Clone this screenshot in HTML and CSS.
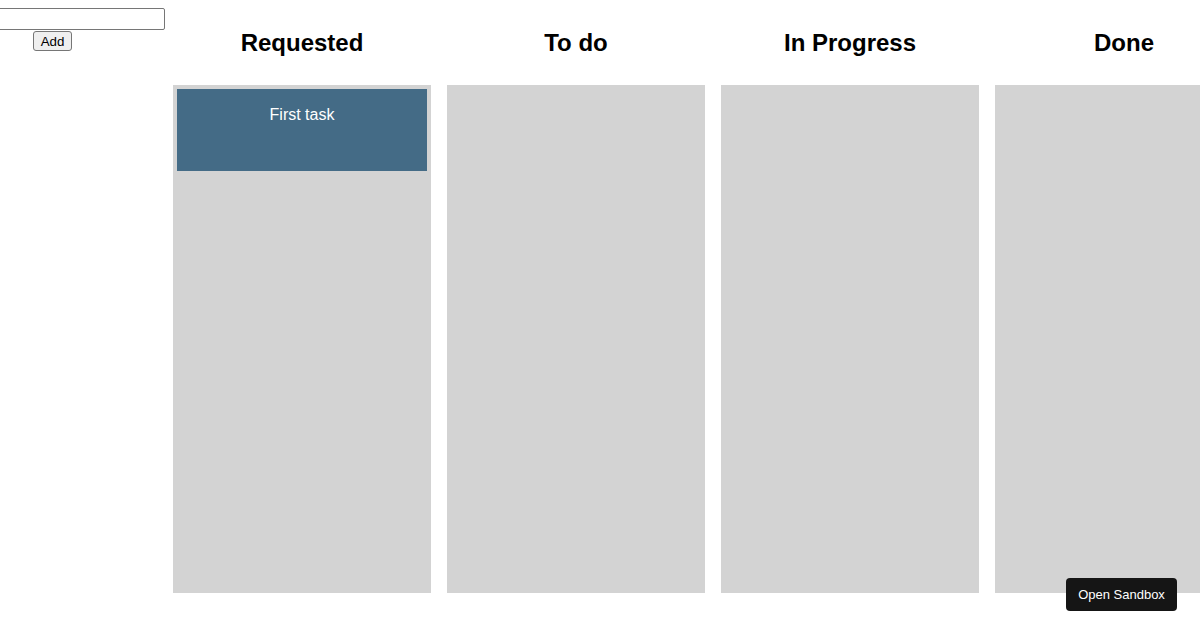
FILE: index.html
```html
<!DOCTYPE html>
<html>
<head>
<meta charset="utf-8">
<link rel="stylesheet" href="styles.css">
</head>
<body>
<div class="app">
  <div class="sidebar">
    <input class="task-input" type="text">
    <button class="add-btn">Add</button>
  </div>
  <div class="board">
    <div class="column">
      <h2 class="col-title">Requested</h2>
      <div class="col-body">
        <div class="card">First task</div>
      </div>
    </div>
    <div class="column">
      <h2 class="col-title">To do</h2>
      <div class="col-body"></div>
    </div>
    <div class="column">
      <h2 class="col-title">In Progress</h2>
      <div class="col-body"></div>
    </div>
    <div class="column">
      <h2 class="col-title">Done</h2>
      <div class="col-body"></div>
    </div>
  </div>
</div>
<button class="sandbox-btn">Open Sandbox</button>
</body>
</html>
```

FILE: styles.css
```css
html {
  overflow: hidden;
}
body {
  margin: 0;
  font-family: "Liberation Sans", Arial, sans-serif;
  background: #fff;
  overflow: hidden;
  width: 1200px;
  height: 630px;
}
.app {
  display: flex;
  align-items: flex-start;
  gap: 8px;
  width: 1300px;
  padding-top: 8px;
}
.sidebar {
  width: 165px;
  flex: none;
  overflow: hidden;
}
.task-input {
  display: block;
  box-sizing: border-box;
  width: 180px;
  height: 22px;
  margin: 0 0 1px -15px;
  border: 1px solid #767676;
  border-radius: 2px;
  padding: 1px 2px;
  font-size: 13.33px;
  font-family: "Liberation Sans", Arial, sans-serif;
}
.add-btn {
  display: block;
  box-sizing: border-box;
  width: 39px;
  height: 20px;
  margin-left: 33px;
  padding: 0;
  font-size: 13.33px;
  font-family: "Liberation Sans", Arial, sans-serif;
  color: #000;
  background: #efefef;
  border: 1px solid #767676;
  border-radius: 3px;
}
.board {
  display: flex;
  gap: 16px;
}
.column {
  width: 258px;
  flex: none;
  display: flex;
  flex-direction: column;
}
.col-title {
  margin: 21px 0 29px;
  font-size: 24px;
  font-weight: bold;
  text-align: center;
  line-height: 27px;
  color: #000;
}
.col-body {
  box-sizing: border-box;
  height: 508px;
  padding: 4px;
  background: #d3d3d3;
}
.card {
  box-sizing: border-box;
  height: 82px;
  padding-top: 17px;
  background: #446b86;
  color: #fff;
  font-size: 16px;
  line-height: 18px;
  text-align: center;
}
.sandbox-btn {
  position: fixed;
  right: 23px;
  bottom: 19px;
  width: 111px;
  height: 33px;
  border: none;
  border-radius: 4px;
  background: #151515;
  color: #fff;
  font-family: "Liberation Sans", Arial, sans-serif;
  font-size: 13px;
  padding: 0;
}
```
